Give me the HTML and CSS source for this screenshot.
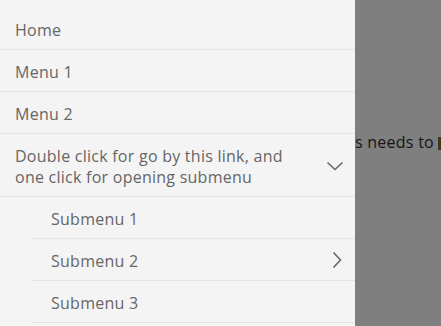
FILE: index.html
```html
<!DOCTYPE html>
<html lang="en">
<head>
    <meta charset="UTF-8">
    <meta name="viewport" content="width=device-width, initial-scale=1.0">
    <title>Side menu</title>
    <link rel="stylesheet" href="styles.css">
</head>
<body>
<div class="page">
    <nav class="menu">
        <ul class="menu-list">
            <li class="item"><a href="#">Home</a></li>
            <li class="item"><a href="#">Menu 1</a></li>
            <li class="item"><a href="#">Menu 2</a></li>
            <li class="item has-sub open">
                <a href="#">Double click for go by this link, and one click for opening submenu</a>
                <svg class="arrow" width="18" height="18" viewBox="0 0 18 18"><path d="M1.5 5.5 L9 12.5 L16.5 5.5" fill="none" stroke="#666" stroke-width="1.6"/></svg>
                <ul class="submenu">
                    <li class="item sub"><a href="#">Submenu 1</a></li>
                    <li class="item sub has-sub">
                        <a href="#">Submenu 2</a>
                        <svg class="arrow" width="18" height="18" viewBox="0 0 18 18"><path d="M5.5 1.5 L12.5 9 L5.5 16.5" fill="none" stroke="#666" stroke-width="1.6"/></svg>
                    </li>
                    <li class="item sub"><a href="#">Submenu 3</a></li>
                </ul>
            </li>
        </ul>
    </nav>
    <main class="content">
        <p>s needs to <span class="mark"></span></p>
    </main>
</div>
</body>
</html>
```

FILE: styles.css
```css
html, body {
    margin: 0;
    height: 100%;
}
body {
    font-family: "Open Sans", sans-serif;
    font-size: 16px;
    letter-spacing: 0.25px;
    overflow: hidden;
}
.page {
    display: flex;
    height: 100%;
}
.menu {
    width: 355px;
    flex: none;
    background-color: #f4f4f4;
    padding-top: 8px;
    box-sizing: border-box;
}
.menu-list,
.submenu {
    list-style: none;
    margin: 0;
    padding: 0;
}
.item {
    position: relative;
    border-bottom: 1px solid #e4e4e4;
}
.item a {
    display: block;
    padding: 12px 55px 8px 15px;
    line-height: 21px;
    color: #666;
    text-decoration: none;
}
.item.open {
    border-bottom: none;
}
.item.open > a {
    border-bottom: 1px solid #e4e4e4;
}
.submenu {
    margin-left: 32px;
}
.item.sub a {
    padding-left: 19px;
}
.arrow {
    position: absolute;
    right: 9px;
    top: 12px;
}
.has-sub.open > .arrow {
    right: 11px;
    top: 23px;
}
.content {
    flex: 1;
    background-color: #7f7f7f;
    color: #151515;
    white-space: nowrap;
    overflow: hidden;
}
.content p {
    margin: 131px 0 0;
}
.mark {
    display: inline-block;
    width: 8px;
    height: 13px;
    vertical-align: -2px;
    background-color: #3b3a1e;
}
```
